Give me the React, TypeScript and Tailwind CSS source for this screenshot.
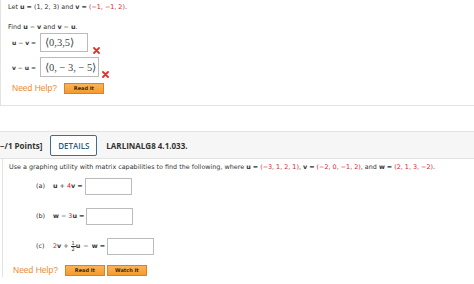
const red = "text-[#d2242f]";

const Vec = ({ children }: { children: React.ReactNode }) => (
  <span className="font-bold text-[#333]">{children}</span>
);

const HelpButton = ({ label }: { label: string }) => (
  <button className="h-[11px] w-[40px] border border-[#d9822b] bg-gradient-to-b from-[#fbb357] to-[#f39a2c] text-[5px] font-bold leading-none text-[#3a2a10]">
    {label}
  </button>
);

const NeedHelp = ({ buttons }: { buttons: string[] }) => (
  <div className="flex h-[13px] items-center gap-[2px]">
    <span className="mr-[5px] font-['Liberation_Sans',sans-serif] text-[8.5px] text-[#ea8a2e]">Need Help?</span>
    {buttons.map((b) => (
      <HelpButton key={b} label={b} />
    ))}
  </div>
);

const Wrong = ({ ml, mt }: { ml: string; mt: string }) => (
  <svg className={`${ml} ${mt} shrink-0`} width="7" height="7" viewBox="0 0 7 7">
    <path d="M1 1L6 6M6 1L1 6" stroke="#e4312f" strokeWidth="1.8" strokeLinecap="round" />
  </svg>
);

const AnswerBox = ({ value, w }: { value: string; w: string }) => (
  <div
    className={`${w} flex shrink-0 items-center overflow-hidden whitespace-nowrap border border-[#bbb] bg-white pl-[4px] font-['Liberation_Serif',serif] text-[10.5px] text-[#444]`}
  >
    {value}
  </div>
);

const EmptyBox = ({ ml }: { ml: string }) => (
  <div className={`${ml} h-[17px] w-[47px] border border-[#bbb] bg-white`} />
);

export default function App() {
  return (
    <div className="h-[284px] w-[474px] overflow-hidden bg-white font-['DejaVu_Sans',sans-serif] text-[6.4px] leading-[9px] text-[#333]">
      {/* previous question */}
      <div className="h-[106px] border-b border-l border-[#e3e3e3] pl-[7px] pt-[3px]">
        <p>
          Let <Vec>u</Vec> = (1, 2, 3) and <Vec>v</Vec> = <span className={red}>(−1, −1, 2)</span>.
        </p>
        <p className="mt-[11px]">
          Find <Vec>u</Vec> − <Vec>v</Vec> and <Vec>v</Vec> − <Vec>u</Vec>.
        </p>
        <div className="mt-[1px] flex h-[19px] items-start pl-[4px]">
          <span className="mt-[5px] w-[28px] whitespace-nowrap text-[6px]">
            <Vec>u</Vec> − <Vec>v</Vec> =
          </span>
          <AnswerBox value="⟨0,3,5⟩" w="w-[48px] h-[19px]" />
          <Wrong ml="ml-[5px]" mt="mt-[14px]" />
        </div>
        <div className="mt-[5px] flex h-[20px] items-start pl-[4px]">
          <span className="mt-[6px] w-[28px] whitespace-nowrap text-[6px]">
            <Vec>v</Vec> − <Vec>u</Vec> =
          </span>
          <AnswerBox value="⟨0, − 3, − 5⟩" w="w-[59px] h-[20px]" />
          <Wrong ml="ml-[3px]" mt="mt-[14px]" />
        </div>
        <div className="mt-[5px] pl-[4px]">
          <NeedHelp buttons={["Read It"]} />
        </div>
      </div>

      <div className="h-[25px]" />

      {/* header band */}
      <div className="flex h-[28px] items-center border-y border-[#e3e3e3] bg-[#f6f6f6]">
        <span className="font-['Open_Sans',sans-serif] text-[8px] font-bold text-[#333]">−/1 Points]</span>
        <button className="ml-[8px] h-[21px] w-[47px] rounded-[2px] border-[1.5px] border-[#3d6f8e] bg-white font-['Open_Sans',sans-serif] text-[8px] font-semibold text-[#2d5d7f]">
          DETAILS
        </button>
        <span className="ml-[9px] font-['Open_Sans',sans-serif] text-[8px] font-bold text-[#333]">
          LARLINALG8 4.1.033.
        </span>
      </div>

      {/* current question */}
      <div className="ml-[2px] border-l border-[#e3e3e3] pl-[6px] pt-[4px]">
        <p className="whitespace-nowrap">
          Use a graphing utility with matrix capabilities to find the following, where <Vec>u</Vec> ={" "}
          <span className={red}>(−3, 1, 2, 1)</span>, <Vec>v</Vec> = <span className={red}>(−2, 0, −1, 2)</span>, and{" "}
          <Vec>w</Vec> = <span className={red}>(2, 1, 3, −2)</span>.
        </p>

        <div className="ml-[27px] mt-[6px] flex items-center">
          <span className="w-[17px]">(a)</span>
          <span>
            <Vec>u</Vec> + <span className={red}>4</span>
            <Vec>v</Vec> =
          </span>
          <EmptyBox ml="ml-[2px]" />
        </div>

        <div className="ml-[27px] mt-[13px] flex items-center">
          <span className="w-[17px]">(b)</span>
          <span>
            <Vec>w</Vec> − <span className={red}>3</span>
            <Vec>u</Vec> =
          </span>
          <EmptyBox ml="ml-[2px]" />
        </div>

        <div className="ml-[27px] mt-[13px] flex items-center">
          <span className="w-[17px]">(c)</span>
          <span className="flex items-center">
            <span className={red}>2</span>
            <Vec>v</Vec>
            <span className="mx-[2px]">+</span>
            <span className="inline-flex flex-col items-center text-[5px] leading-[5px]">
              <span className="border-b border-[#333] px-[1px]">1</span>
              <span>2</span>
            </span>
            <Vec>u</Vec>
            <span className="mx-[3px]">−</span>
            <Vec>w</Vec>
            <span className="ml-[2px]">=</span>
          </span>
          <EmptyBox ml="ml-[2px]" />
        </div>

        <div className="mt-[9px] pl-[4px]">
          <NeedHelp buttons={["Read It", "Watch It"]} />
        </div>
      </div>
    </div>
  );
}
